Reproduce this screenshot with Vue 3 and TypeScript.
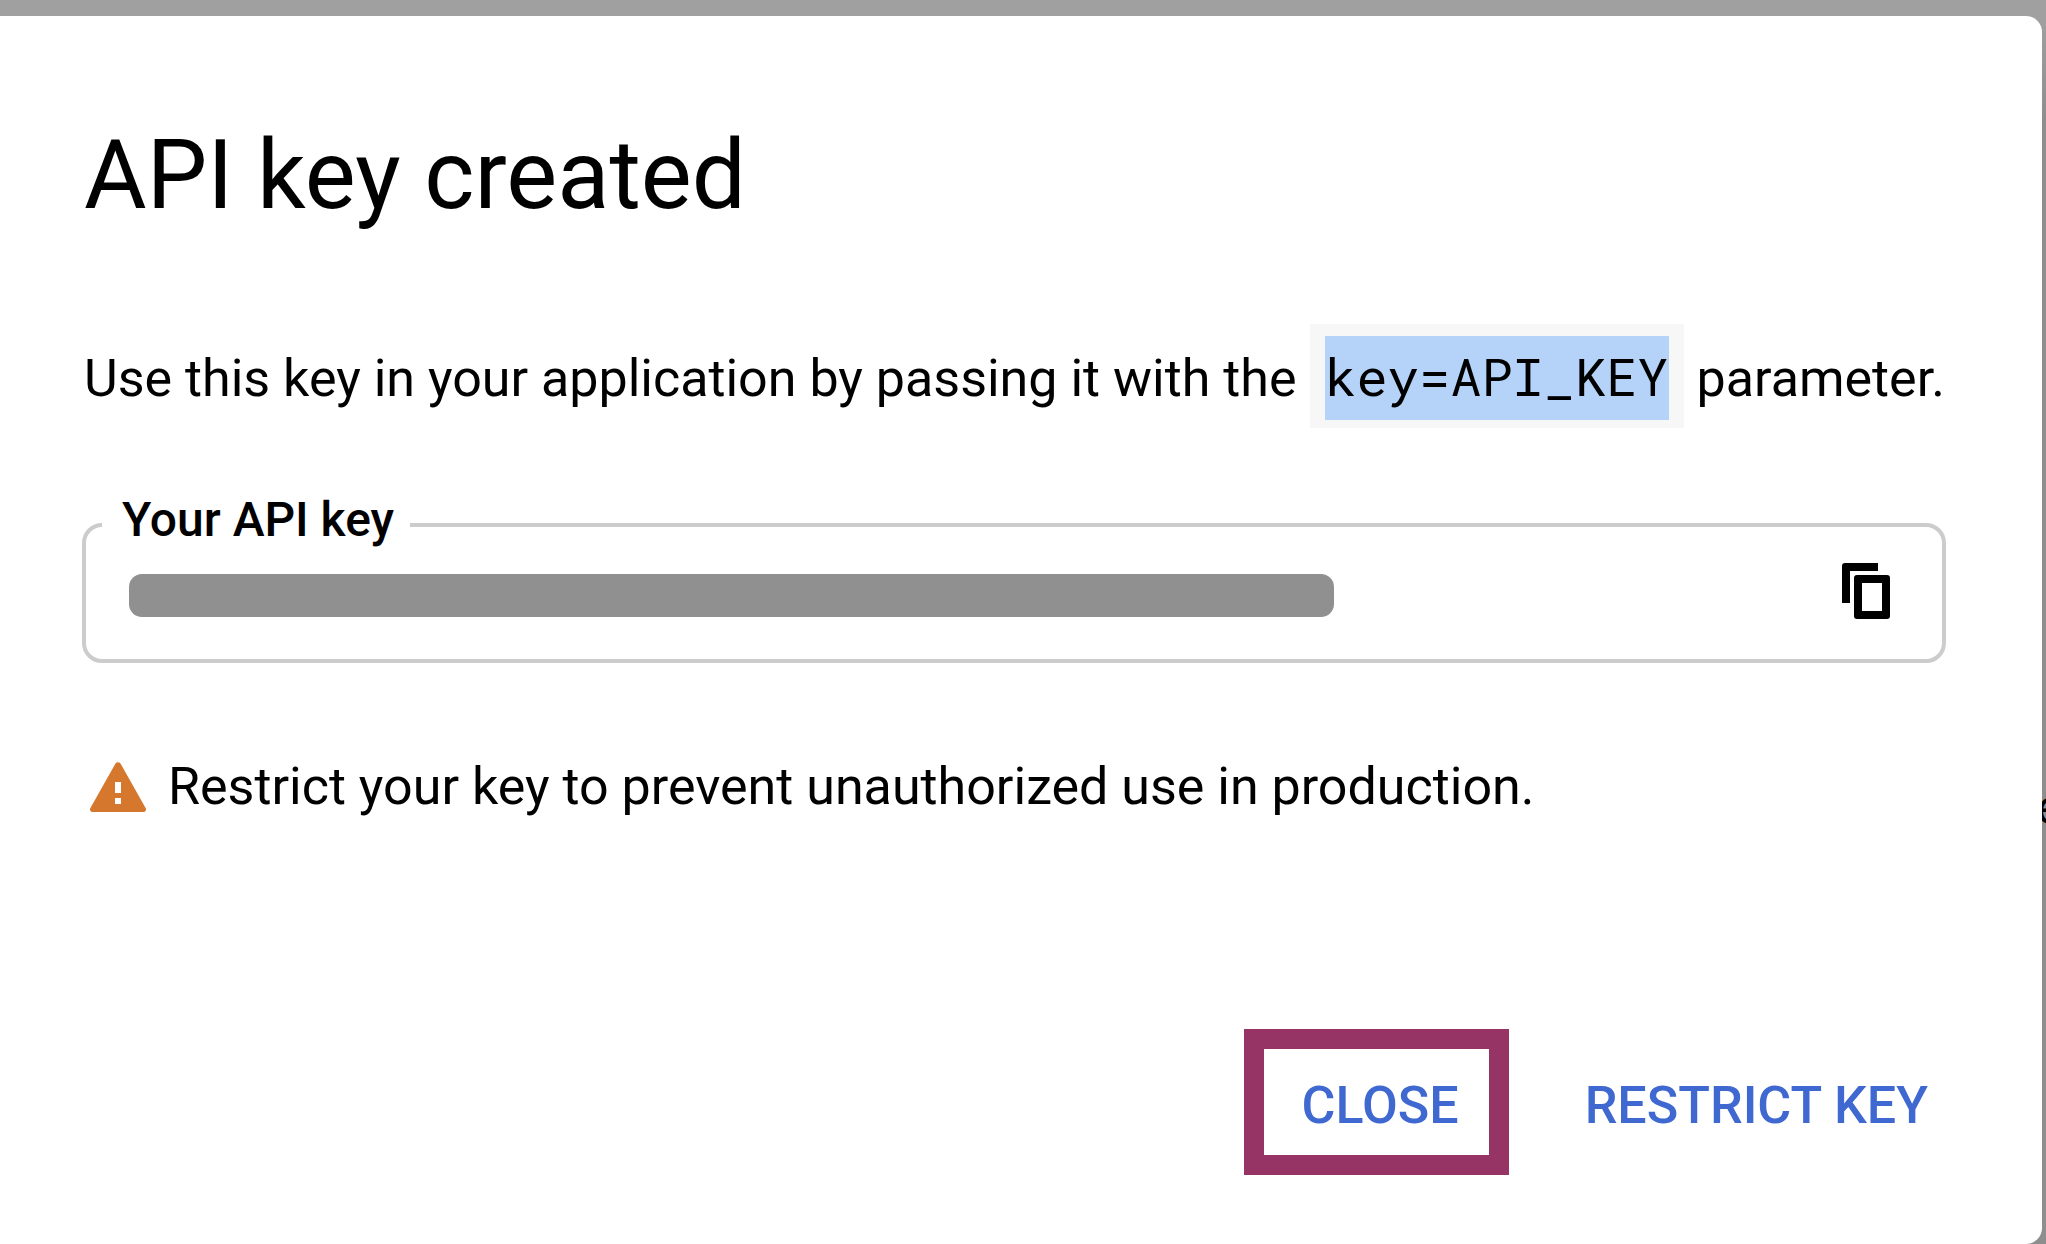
<script setup lang="ts">
import { ref } from 'vue'

const open = ref(true)
const apiKey = ref('')

function copyKey(): void {
  navigator.clipboard?.writeText(apiKey.value)
}

function close(): void {
  open.value = false
}
</script>

<template>
  <div class="backdrop">
    <span class="behind" aria-hidden="true">e</span>
    <main v-if="open" class="dialog" role="dialog" aria-labelledby="dialog-title">
      <h1 id="dialog-title" class="title">API key created</h1>
      <p class="text">
        Use this key in your application by passing it with the
        <code class="code"><mark class="selected">key=API_KEY</mark></code>
        parameter.
      </p>

      <fieldset class="field">
        <legend class="legend"><label for="api-key">Your API key</label></legend>
        <div class="row">
          <input id="api-key" v-model="apiKey" class="key" type="text" readonly />
          <button class="copy" type="button" aria-label="Copy API key" @click="copyKey">
            <svg class="copy-icon" viewBox="0 0 48 56" aria-hidden="true">
              <path d="M0 40V3a3 3 0 0 1 3-3h33v8H8v32z" />
              <path
                fill-rule="evenodd"
                d="M15 12h30a3 3 0 0 1 3 3v38a3 3 0 0 1-3 3H15a3 3 0 0 1-3-3V15a3 3 0 0 1 3-3zm5 8v28h20V20z"
              />
            </svg>
          </button>
        </div>
      </fieldset>

      <p class="warning">
        <svg class="warning-icon" viewBox="0 0 56 50" aria-hidden="true">
          <path
            fill-rule="evenodd"
            d="M25.500 1.500a3 3 0 0 1 5 0L55.600 46a2.600 2.600 0 0 1-2.300 4H2.700a2.600 2.600 0 0 1-2.300-4zM25 20v11h6V20zM25 36v6h6v-6z"
          />
        </svg>
        <span>Restrict your key to prevent unauthorized use in production.</span>
      </p>

      <div class="actions">
        <button class="action highlighted" type="button" @click="close">CLOSE</button>
        <button class="action" type="button">RESTRICT KEY</button>
      </div>
    </main>
  </div>
</template>

<style>
body {
  margin: 0;
}
</style>

<style scoped>
.backdrop {
  position: relative;
  display: grid;
  box-sizing: border-box;
  min-height: 100vh;
  padding: 16px 4px 0 0;
  overflow: hidden;
  background: linear-gradient(#a0a0a0, #a0a0a0 16px, #8e8e8e 120px);
  color: #000;
  font-family: Roboto, 'Liberation Sans', sans-serif;
}

.behind {
  position: absolute;
  top: 780px;
  right: -16px;
  font-size: 48px;
  line-height: 56px;
}

.dialog {
  position: relative;
  box-sizing: border-box;
  min-width: 0;
  padding: 103px 96px 64px 82px;
  border-radius: 0 16px 16px 0;
  background: #fff;
}

.title {
  margin: 0;
  padding-left: 2px;
  font-size: 96px;
  font-weight: 400;
  line-height: 112px;
}

.text {
  margin: 93px 0 0;
  padding-left: 2px;
  font-size: 52px;
  line-height: 104px;
  white-space: nowrap;
}

.code {
  display: inline-block;
  margin-left: 1px;
  padding: 12px 15px 8px;
  background: #f7f7f7;
  font-family: 'Roboto Mono', 'Liberation Mono', monospace;
  font-size: 52px;
  line-height: 80px;
}

.selected {
  display: block;
  padding-bottom: 4px;
  background: #b5d3f8;
  color: inherit;
}

.field {
  min-width: 0;
  margin: 61px 0 0;
  padding: 0 52px 40px 16px;
  border: 4px solid #ccc;
  border-radius: 20px;
}

.legend {
  padding: 0 16px 10px 20px;
  font-size: 48px;
  font-weight: 500;
  line-height: 56px;
}

.row {
  display: flex;
  align-items: center;
  justify-content: space-between;
  padding: 5px 0 0 27px;
}

.key {
  box-sizing: border-box;
  width: calc(100% - 556px);
  height: 43px;
  margin: 8px 0 0;
  padding: 0 16px;
  border: 0;
  border-radius: 13px;
  background: #909090;
  color: #909090;
  font: inherit;
}

.copy {
  padding: 0;
  border: 0;
  background: none;
}

.copy-icon {
  display: block;
  width: 48px;
  height: 56px;
}

.warning {
  display: flex;
  align-items: center;
  gap: 22px;
  margin: 88px 0 0;
  padding-left: 8px;
  font-size: 52px;
  line-height: 72px;
}

.warning-icon {
  width: 56px;
  height: 50px;
  fill: #d5782e;
}

.actions {
  display: flex;
  justify-content: flex-end;
  gap: 56px;
  margin: 206px -2px 0 0;
}

.action {
  padding: 24px 0 16px;
  border: 20px solid transparent;
  background: none;
  color: #3f69d0;
  font: 500 52px/66px Roboto, 'Liberation Sans', sans-serif;
}

.highlighted {
  padding: 24px 30px 16px 38px;
  border-color: #963466;
}
</style>
